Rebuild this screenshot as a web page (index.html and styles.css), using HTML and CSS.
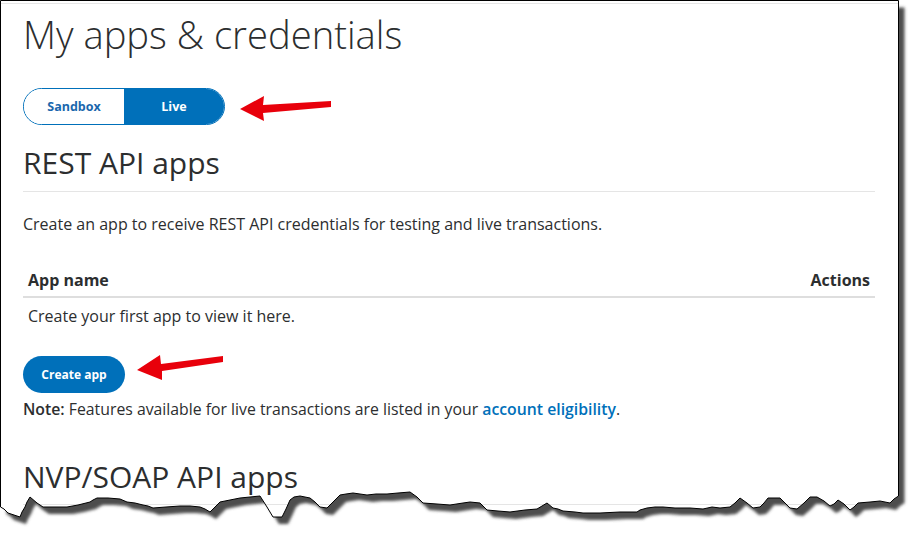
FILE: index.html
```html
<!DOCTYPE html>
<html lang="en">
<head>
<meta charset="utf-8">
<title>My apps &amp; credentials</title>
<link rel="stylesheet" href="styles.css">
</head>
<body>
<div class="page">
  <div class="topline"></div>
  <main class="content">
    <h1 class="title">My apps &amp; credentials</h1>
    <div class="toggle">
      <button class="toggle-btn">Sandbox</button>
      <button class="toggle-btn active">Live</button>
    </div>
    <h2 class="section-title">REST API apps</h2>
    <p class="desc">Create an app to receive REST API credentials for testing and live transactions.</p>
    <div class="table">
      <div class="thead">
        <span>App name</span>
        <span>Actions</span>
      </div>
      <div class="empty">Create your first app to view it here.</div>
    </div>
    <button class="create-btn">Create app</button>
    <p class="note"><b>Note:</b> Features available for live transactions are listed in your <a href="#" class="link">account eligibility</a>.</p>
    <h2 class="section-title nvp">NVP/SOAP API apps</h2>
  </main>
</div>

<svg class="arrows" width="915" height="539" viewBox="0 0 915 539" aria-hidden="true">
  <polygon fill="#e8000b" points="240,109 264,96 263,105 331,101 331,107 263,113 264,121"/>
  <polygon fill="#e8000b" points="137,370 160,355 161,364 223,356 223,362 162,371 162,380"/>
</svg>

<svg class="frame" width="915" height="539" viewBox="0 0 915 539" aria-hidden="true">
  <defs>
    <path id="edge" d="M0.5,0.5 H898.5 V496 L894,499 L890,503 L885,502 L880,501 L870,502 L858,503 L854,507 L850,510 L844,504 L838,500 L834,504 L830,506 L824,501 L817,497 L810,497 L804,503 L797,509 L790,508 L785,503 L780,498 L768,498 L764,503 L760,507 L753,508 L747,503 L740,498 L735,503 L730,507 L720,508 L712,507 L703,509 L690,508 L675,508 L663,507 L655,507 L647,508 L640,510 L637,512 L620,512 L600,513 L583,513 L575,512 L563,511 L558,509 L553,508 L547,503 L542,506 L537,509 L525,510 L510,512 L498,511 L487,510 L483,506 L480,503 L470,502 L463,503 L450,505 L437,504 L423,503 L420,500 L417,497 L410,492 L398,493 L387,494 L376,494 L367,495 L353,493 L346,494 L340,495 L333,502 L327,508 L320,507 L315,502 L310,498 L300,496 L294,497 L290,500 L286,509 L282,517 L273,517 L270,512 L267,507 L260,496 L250,497 L240,498 L230,500 L220,502 L215,507 L210,512 L205,509 L200,507 L190,506 L180,506 L166,507 L153,508 L148,506 L143,505 L135,503 L127,502 L120,499 L108,498 L97,498 L93,500 L90,502 L78,505 L67,507 L55,507 L43,507 L40,505 L37,503 L30,497 L27,502 L25,507 L22,512 L20,517 L14,515 L8,513 L4,509 L0.5,507 Z"/>
    <clipPath id="outside">
      <path clip-rule="evenodd" d="M0,0 H915 V539 H0 Z M0.5,0.5 H898.5 V496 L894,499 L890,503 L885,502 L880,501 L870,502 L858,503 L854,507 L850,510 L844,504 L838,500 L834,504 L830,506 L824,501 L817,497 L810,497 L804,503 L797,509 L790,508 L785,503 L780,498 L768,498 L764,503 L760,507 L753,508 L747,503 L740,498 L735,503 L730,507 L720,508 L712,507 L703,509 L690,508 L675,508 L663,507 L655,507 L647,508 L640,510 L637,512 L620,512 L600,513 L583,513 L575,512 L563,511 L558,509 L553,508 L547,503 L542,506 L537,509 L525,510 L510,512 L498,511 L487,510 L483,506 L480,503 L470,502 L463,503 L450,505 L437,504 L423,503 L420,500 L417,497 L410,492 L398,493 L387,494 L376,494 L367,495 L353,493 L346,494 L340,495 L333,502 L327,508 L320,507 L315,502 L310,498 L300,496 L294,497 L290,500 L286,509 L282,517 L273,517 L270,512 L267,507 L260,496 L250,497 L240,498 L230,500 L220,502 L215,507 L210,512 L205,509 L200,507 L190,506 L180,506 L166,507 L153,508 L148,506 L143,505 L135,503 L127,502 L120,499 L108,498 L97,498 L93,500 L90,502 L78,505 L67,507 L55,507 L43,507 L40,505 L37,503 L30,497 L27,502 L25,507 L22,512 L20,517 L14,515 L8,513 L4,509 L0.5,507 Z"/>
    </clipPath>
    <filter id="blur" x="-5%" y="-5%" width="110%" height="110%">
      <feGaussianBlur stdDeviation="1.6"/>
    </filter>
  </defs>
  <path fill="#ffffff" fill-rule="evenodd" d="M0,0 H915 V539 H0 Z M0.5,0.5 H898.5 V496 L894,499 L890,503 L885,502 L880,501 L870,502 L858,503 L854,507 L850,510 L844,504 L838,500 L834,504 L830,506 L824,501 L817,497 L810,497 L804,503 L797,509 L790,508 L785,503 L780,498 L768,498 L764,503 L760,507 L753,508 L747,503 L740,498 L735,503 L730,507 L720,508 L712,507 L703,509 L690,508 L675,508 L663,507 L655,507 L647,508 L640,510 L637,512 L620,512 L600,513 L583,513 L575,512 L563,511 L558,509 L553,508 L547,503 L542,506 L537,509 L525,510 L510,512 L498,511 L487,510 L483,506 L480,503 L470,502 L463,503 L450,505 L437,504 L423,503 L420,500 L417,497 L410,492 L398,493 L387,494 L376,494 L367,495 L353,493 L346,494 L340,495 L333,502 L327,508 L320,507 L315,502 L310,498 L300,496 L294,497 L290,500 L286,509 L282,517 L273,517 L270,512 L267,507 L260,496 L250,497 L240,498 L230,500 L220,502 L215,507 L210,512 L205,509 L200,507 L190,506 L180,506 L166,507 L153,508 L148,506 L143,505 L135,503 L127,502 L120,499 L108,498 L97,498 L93,500 L90,502 L78,505 L67,507 L55,507 L43,507 L40,505 L37,503 L30,497 L27,502 L25,507 L22,512 L20,517 L14,515 L8,513 L4,509 L0.5,507 Z"/>
  <g clip-path="url(#outside)">
    <use href="#edge" fill="#4d4d4d" transform="translate(6,7)" filter="url(#blur)"/>
  </g>
  <use href="#edge" fill="none" stroke="#000" stroke-width="1"/>
</svg>
</body>
</html>
```

FILE: styles.css
```css
* { box-sizing: border-box; }

html, body {
  margin: 0;
  padding: 0;
  background: #ffffff;
}

body {
  width: 915px;
  height: 539px;
  overflow: hidden;
  position: relative;
  font-family: "Open Sans", "Liberation Sans", sans-serif;
  color: #2c2e2f;
}

.page {
  width: 898px;
}

.topline {
  margin-top: 3px;
  height: 1px;
  background: #e6e6e6;
}

.content {
  padding: 0 23px;
  display: flex;
  flex-direction: column;
  align-items: flex-start;
}

.title {
  margin: 8px 0 0;
  font-size: 38.2px;
  line-height: 44px;
  font-weight: 300;
  color: #2c2e2f;
}

.toggle {
  margin-top: 32px;
  display: flex;
  width: 202px;
  height: 37px;
  border: 1px solid #0070ba;
  border-radius: 19px;
  overflow: hidden;
}

.toggle-btn {
  flex: 0 0 100px;
  border: 0;
  margin: 0;
  padding: 0;
  background: #fff;
  color: #1a67ad;
  font-family: "Open Sans", "Liberation Sans", sans-serif;
  font-weight: 700;
  font-size: 12.5px;
}

.toggle-btn.active {
  flex: 1 1 auto;
  background: #0070ba;
  color: #fff;
}

.section-title {
  margin: 20px 0 0;
  font-size: 30px;
  line-height: 36px;
  font-weight: 400;
  color: #2c2e2f;
  align-self: stretch;
  padding-bottom: 10px;
  border-bottom: 1px solid #e5e5e5;
}

.desc {
  margin: 20px 0 0;
  font-size: 16px;
  line-height: 24px;
}

.table {
  margin-top: 32px;
  align-self: stretch;
}

.thead {
  display: flex;
  justify-content: space-between;
  padding: 0 5px 4px;
  border-bottom: 2px solid #dedede;
  font-size: 16px;
  line-height: 24px;
  font-weight: 700;
  color: #2c2e2f;
}

.empty {
  padding: 6px 5px 0;
  font-size: 16px;
  line-height: 24px;
}

.create-btn {
  margin-top: 28px;
  width: 102px;
  height: 37px;
  border: 0;
  border-radius: 19px;
  background: #0070ba;
  color: #fff;
  font-family: "Open Sans", "Liberation Sans", sans-serif;
  font-weight: 700;
  font-size: 12px;
  padding: 0;
}

.note {
  margin: 4px 0 0;
  font-size: 15.8px;
  line-height: 24px;
}

.note b {
  font-weight: 600;
}

.link {
  color: #0070ba;
  font-weight: 600;
  text-decoration: none;
}

.section-title.nvp {
  margin-top: 38px;
  padding-bottom: 9px;
}

.arrows,
.frame {
  position: absolute;
  left: 0;
  top: 0;
  pointer-events: none;
}
```
